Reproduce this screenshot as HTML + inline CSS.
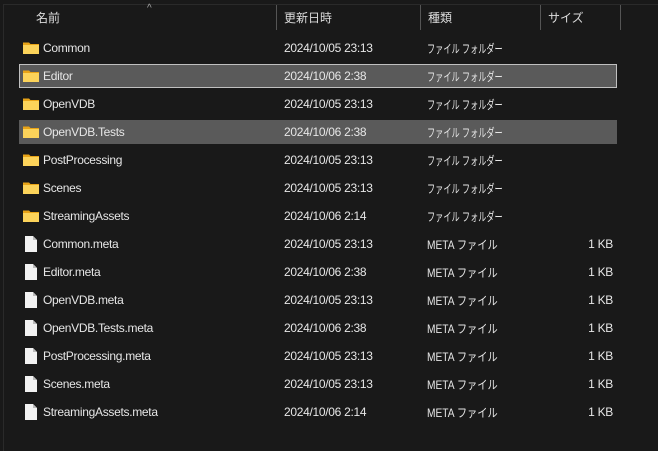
<!DOCTYPE html><html><head><meta charset="utf-8"><style>
body{margin:0;width:658px;height:451px;background:#191919;overflow:hidden;position:relative;font-family:"Liberation Sans","Noto Sans CJK JP",sans-serif;font-size:12px;color:#e6e6e6}
.l{position:absolute}
.h{top:11px;color:#dcdcdc;line-height:14px}
.d{position:absolute;top:5px;width:1px;height:25px;background:#555}
.r{position:absolute;left:19px;width:598px;height:24px}
.r span{position:absolute;top:5px;white-space:nowrap;line-height:14px;letter-spacing:-0.3px}
.r span.j{font-size:12px;letter-spacing:0;top:6px;transform:scaleX(0.68);transform-origin:left center}
.sel{background:#5a5a5a}
.foc{box-shadow:inset 0 0 0 1px #c0c0c0}
.fi{position:absolute;left:4px;top:5px}
</style></head><body>
<div class="l" style="left:3px;top:4px;width:1px;height:447px;background:#2a2a2a"></div>
<div class="l" style="left:3px;top:4px;width:655px;height:1px;background:#2a2a2a"></div>
<div class="l" style="left:147px;top:3px;color:#aaa;font-size:10px">^</div>
<div class="l h" style="left:36px">名前</div>
<div class="l h" style="left:284px">更新日時</div>
<div class="l h" style="left:428px">種類</div>
<div class="l h" style="left:548px">サイズ</div>
<div class="d" style="left:276px"></div><div class="d" style="left:420px"></div><div class="d" style="left:540px"></div><div class="d" style="left:620px"></div>
<div id="rows"></div>
<script>
var F=[["Common","2024/10/05 23:13"],["Editor","2024/10/06 2:38"],["OpenVDB","2024/10/05 23:13"],["OpenVDB.Tests","2024/10/06 2:38"],["PostProcessing","2024/10/05 23:13"],["Scenes","2024/10/05 23:13"],["StreamingAssets","2024/10/06 2:14"]];
var M=[["Common.meta","2024/10/05 23:13"],["Editor.meta","2024/10/06 2:38"],["OpenVDB.meta","2024/10/05 23:13"],["OpenVDB.Tests.meta","2024/10/06 2:38"],["PostProcessing.meta","2024/10/05 23:13"],["Scenes.meta","2024/10/05 23:13"],["StreamingAssets.meta","2024/10/06 2:14"]];
var folder='<svg class="fi" width="16" height="14" viewBox="0 0 16 14"><path d="M0 1.5h6l1.5 1.5H16v10H0z" fill="#e8a317"/><path d="M0 4h16v9H0z" fill="#fcd35a"/></svg>';
var file='<svg class="fi" style="left:6px;top:4px" width="12" height="16" viewBox="0 0 12 16"><path d="M0 0h8l4 4v12H0z" fill="#f2f2f2"/><path d="M8 0v4h4" fill="#bbb"/></svg>';
var h='';
F.forEach(function(f,i){var y=36+i*28;var c=i==1?'r sel foc':i==3?'r sel':'r';
h+='<div class="'+c+'" style="top:'+y+'px">'+folder+'<span style="left:24px">'+f[0]+'</span><span style="left:265px">'+f[1]+'</span><span class="j" style="left:408px">ファイル フォルダー</span></div>';});
M.forEach(function(f,i){var y=232+i*28;
h+='<div class="r" style="top:'+y+'px">'+file+'<span style="left:24px">'+f[0]+'</span><span style="left:265px">'+f[1]+'</span><span class="j" style="left:408px;transform:scaleX(0.85)">META ファイル</span><span style="right:4px">1 KB</span></div>';});
document.getElementById('rows').innerHTML=h;
</script>
</body></html>
